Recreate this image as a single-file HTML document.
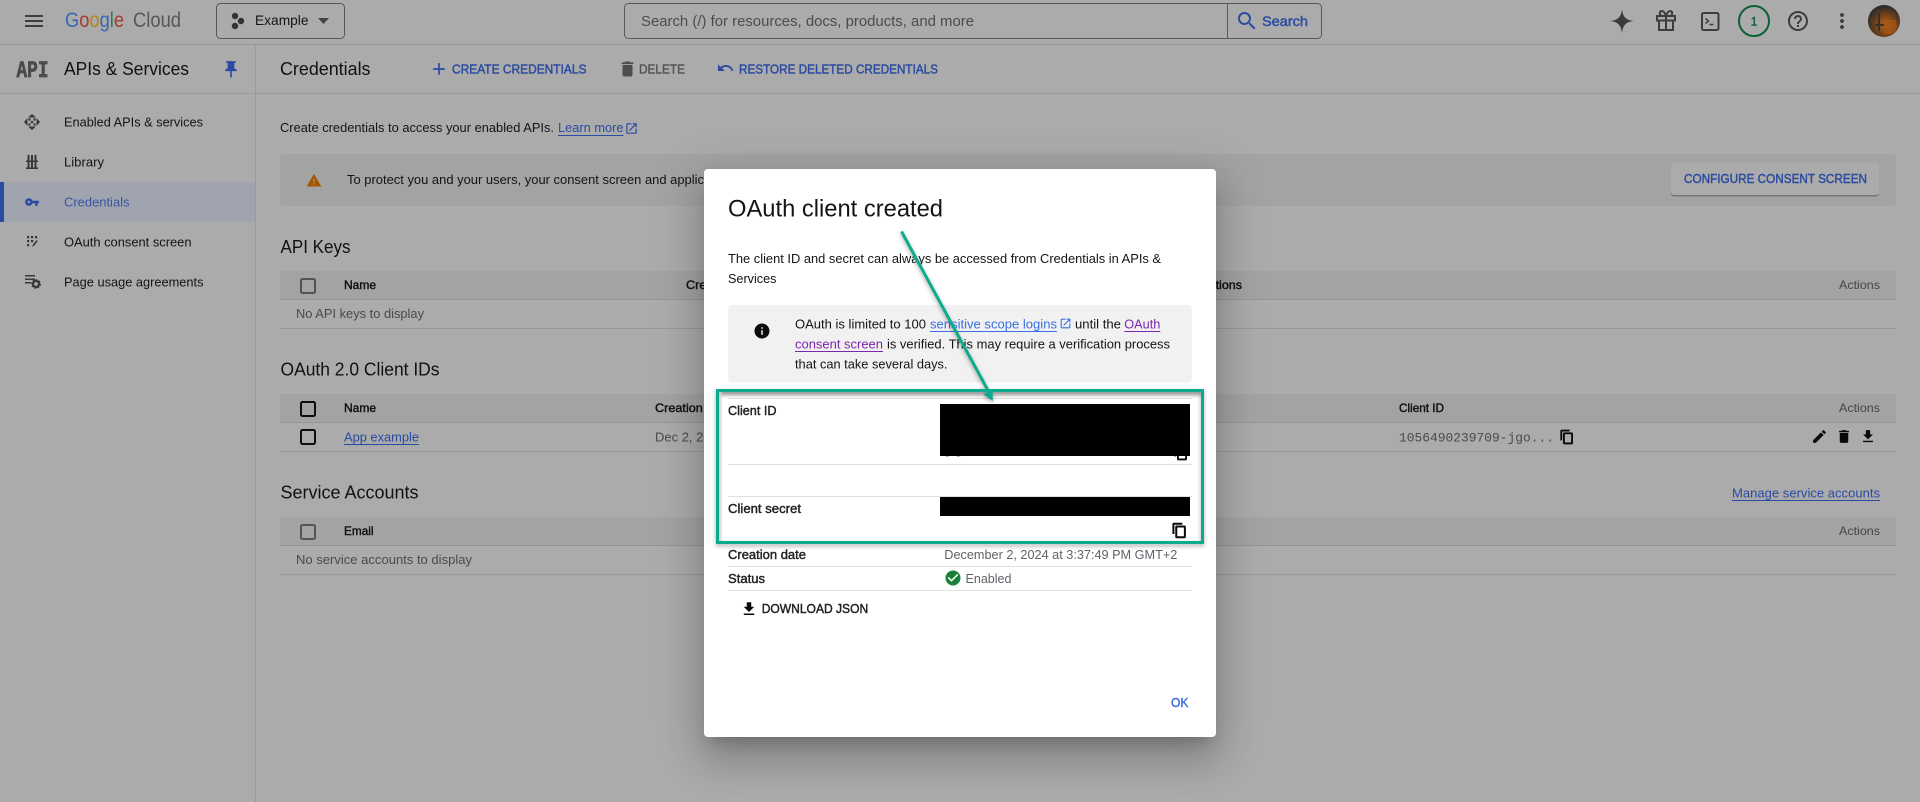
<!DOCTYPE html>
<html lang="en"><head><meta charset="utf-8"><title>Credentials</title>
<style>
html,body{margin:0;padding:0;width:1920px;height:802px;overflow:hidden;background:#ababab}
svg{position:absolute;left:0;top:0}
text{font-family:"Liberation Sans",Arial,sans-serif;font-size:13px;fill:#141414}
.m{stroke:currentColor;stroke-width:.42px}
.h{font-size:18px;fill:#111}
.th{font-size:12px;color:#111;fill:#111;stroke:#111;stroke-width:.42px}
.ac{font-size:12px;fill:#454545}
.mu{fill:#4a4a4a}
.b{fill:#2a4ba2}
.lb{fill:#3b6ee0}
.pu{fill:#7a27ad}
.dg{fill:#5f6368}
.l{fill:#202124;stroke:#202124;stroke-width:.42px}
#dlg{position:absolute;left:704px;top:169px;width:512px;height:568px;background:#fff;border-radius:4px;box-shadow:0 11px 15px -7px rgba(0,0,0,.2),0 24px 38px 3px rgba(0,0,0,.14),0 9px 46px 8px rgba(0,0,0,.12)}
</style></head><body>
<svg width="1920" height="802" viewBox="0 0 1920 802" xmlns="http://www.w3.org/2000/svg">
<defs>
<symbol id="i-menu" viewBox="0 0 24 24"><path d="M3 18h18v-2H3v2zm0-5h18v-2H3v2zm0-7v2h18V6H3z"/></symbol>
<symbol id="i-search" viewBox="0 0 24 24"><path d="M15.500 14h-.79l-.28-.27A6.471 6.471 0 0 0 16 9.500 6.500 6.500 0 1 0 9.500 16c1.610 0 3.090-.59 4.230-1.570l.27.28v.79l5 4.990L20.490 19l-4.990-5zm-6 0C7.010 14 5 11.990 5 9.500S7.010 5 9.500 5 14 7.010 14 9.500 11.990 14 9.500 14z"/></symbol>
<symbol id="i-add" viewBox="0 0 24 24"><path d="M19 13h-6v6h-2v-6H5v-2h6V5h2v6h6v2z"/></symbol>
<symbol id="i-del" viewBox="0 0 24 24"><path d="M6 19c0 1.100.9 2 2 2h8c1.100 0 2-.9 2-2V7H6v12zM19 4h-3.500l-1-1h-5l-1 1H5v2h14V4z"/></symbol>
<symbol id="i-undo" viewBox="0 0 24 24"><path d="M12.500 8c-2.650 0-5.050.99-6.900 2.600L2 7v9h9l-3.620-3.620c1.390-1.160 3.160-1.880 5.120-1.880 3.540 0 6.550 2.310 7.600 5.500l2.370-.78C21.080 11.030 17.150 8 12.500 8z"/></symbol>
<symbol id="i-key" viewBox="0 0 24 24"><path d="M12.650 10C11.830 7.670 9.610 6 7 6c-3.310 0-6 2.690-6 6s2.690 6 6 6c2.610 0 4.830-1.670 5.650-4H17v4h4v-4h2v-4H12.650zM7 14c-1.100 0-2-.9-2-2s.9-2 2-2 2 .9 2 2-.9 2-2 2z"/></symbol>
<symbol id="i-warn" viewBox="0 0 24 24"><path d="M1 21h22L12 2 1 21zm12-3h-2v-2h2v2zm0-4h-2v-4h2v4z"/></symbol>
<symbol id="i-info" viewBox="0 0 24 24"><path d="M12 2C6.480 2 2 6.480 2 12s4.480 10 10 10 10-4.480 10-10S17.520 2 12 2zm1 15h-2v-6h2v6zm0-8h-2V7h2v2z"/></symbol>
<symbol id="i-copy" viewBox="0 0 24 24"><path d="M16 1H4c-1.100 0-2 .9-2 2v14h2.800V3.800H16V1zm3 4H8c-1.100 0-2 .9-2 2v14c0 1.100.9 2 2 2h11c1.100 0 2-.9 2-2V7c0-1.100-.9-2-2-2zm-.8 15.200H8.800V7.800h9.400v12.400z"/></symbol>
<symbol id="i-edit" viewBox="0 0 24 24"><path d="M3 17.250V21h3.750L17.810 9.940l-3.750-3.750L3 17.250zM20.710 7.040c.39-.39.39-1.020 0-1.410l-2.340-2.340c-.39-.39-1.020-.39-1.410 0l-1.830 1.830 3.750 3.750 1.830-1.830z"/></symbol>
<symbol id="i-dl" viewBox="0 0 24 24"><path d="M19 9h-4V3H9v6H5l7 7 7-7zM5 18v2h14v-2H5z"/></symbol>
<symbol id="i-check" viewBox="0 0 24 24"><path d="M12 2C6.480 2 2 6.480 2 12s4.480 10 10 10 10-4.480 10-10S17.520 2 12 2zm-2 15l-5-5 1.410-1.410L10 14.170l7.590-7.590L19 8l-9 9z"/></symbol>
<symbol id="i-open" viewBox="0 0 24 24"><path d="M19 19H5V5h7V3H5c-1.110 0-2 .9-2 2v14c0 1.100.89 2 2 2h14c1.100 0 2-.9 2-2v-7h-2v7zM14 3v2h3.590l-9.830 9.830 1.410 1.410L19 6.410V10h2V3h-7z"/></symbol>
<symbol id="i-pin" viewBox="0 0 24 24"><path d="M16 9V4h1c.55 0 1-.45 1-1s-.45-1-1-1H7c-.55 0-1 .45-1 1s.45 1 1 1h1v5c0 1.660-1.340 3-3 3v2h5.970v7l1 1 1-1v-7H19v-2c-1.660 0-3-1.340-3-3z"/></symbol>
<symbol id="i-help" viewBox="0 0 24 24"><path d="M11 18h2v-2h-2v2zm1-16C6.480 2 2 6.480 2 12s4.480 10 10 10 10-4.480 10-10S17.520 2 12 2zm0 18c-4.410 0-8-3.590-8-8s3.590-8 8-8 8 3.590 8 8-3.590 8-8 8zm0-14c-2.210 0-4 1.790-4 4h2c0-1.100.9-2 2-2s2 .9 2 2c0 2-3 1.750-3 5h2c0-2.250 3-2.500 3-5 0-2.210-1.790-4-4-4z"/></symbol>
<symbol id="i-more" viewBox="0 0 24 24"><path d="M12 8c1.100 0 2-.9 2-2s-.9-2-2-2-2 .9-2 2 .9 2 2 2zm0 2c-1.100 0-2 .9-2 2s.9 2 2 2 2-.9 2-2-.9-2-2-2zm0 6c-1.100 0-2 .9-2 2s.9 2 2 2 2-.9 2-2-.9-2-2-2z"/></symbol>
<radialGradient id="av" cx="55%" cy="62%" r="58%"><stop offset="0" stop-color="#b8641c"/><stop offset=".5" stop-color="#7c4416"/><stop offset="1" stop-color="#2a2c2a"/></radialGradient>
</defs>

<rect width="1920" height="802" fill="#ababab"/>
<rect x="0" y="44" width="1920" height="1" fill="#969696"/>
<rect x="0" y="93" width="1920" height="1" fill="#9a9a9a"/>
<rect x="255" y="45" width="1" height="757" fill="#9a9a9a"/>

<use href="#i-menu" x="22" y="9" width="24" height="24" fill="#3e3e3e"/>
<text x="65" y="27" textLength="59" lengthAdjust="spacingAndGlyphs" style="font-size:21px"><tspan fill="#3a66b5">G</tspan><tspan fill="#a83a30">o</tspan><tspan fill="#b08a12">o</tspan><tspan fill="#3a66b5">g</tspan><tspan fill="#2f7d47">l</tspan><tspan fill="#a83a30">e</tspan></text>
<text x="133" y="27" textLength="48" lengthAdjust="spacingAndGlyphs" style="font-size:21px;fill:#575757">Cloud</text>

<rect x="216.500" y="3.500" width="128" height="35" rx="4" fill="none" stroke="#565656"/>
<circle cx="235" cy="16" r="3.200" fill="#333"/><circle cx="241" cy="21" r="3.200" fill="#333"/><circle cx="235" cy="26" r="3.200" fill="#333"/>
<text x="255" y="25" textLength="53.500" lengthAdjust="spacingAndGlyphs" style="font-size:14px">Example</text>
<path d="M318 18h11l-5.500 6z" fill="#444"/>

<rect x="624.500" y="3.500" width="697" height="35" rx="4" fill="none" stroke="#5a5a5a"/>
<rect x="1227" y="4" width="1" height="34" fill="#5a5a5a"/>
<text x="641" y="26" textLength="333" lengthAdjust="spacingAndGlyphs" style="font-size:14.500px;fill:#4c4c4c">Search (/) for resources, docs, products, and more</text>
<use href="#i-search" x="1235" y="9" width="24" height="24" fill="#2a4ba2"/>
<text x="1262" y="26" class="b m" color="#2a4ba2" textLength="46" lengthAdjust="spacingAndGlyphs" style="font-size:14px">Search</text>

<path d="M1622 9.500C1623 17 1626 20 1633.500 21 1626 22 1623 25 1622 33 1621 25 1618 22 1610.500 21 1618 20 1621 17 1622 9.500Z" fill="#3b3b3b"/>
<g fill="none" stroke="#3d3d3d" stroke-width="2"><rect x="1657" y="16" width="18" height="4.500"/><path d="M1659 20.500V30H1673V20.500M1666 16V30M1666 16c-1-3-2.500-5-4.300-5-2.500 0-2.500 4 0 5M1666 16c1-3 2.500-5 4.300-5 2.500 0 2.500 4 0 5"/></g>
<rect x="1702" y="13" width="16.500" height="17" rx="1.500" fill="none" stroke="#3d3d3d" stroke-width="2"/><path d="M1705.500 18.500l3 2.500-3 2.500M1709.500 24.500h4" fill="none" stroke="#3d3d3d" stroke-width="1.500"/>
<circle cx="1754" cy="21" r="15" fill="none" stroke="#0b6034" stroke-width="2"/>
<text x="1750.700" y="25.500" class="m" color="#0b6034" style="font-size:12px;fill:#0b6034">1</text>
<use href="#i-help" x="1786" y="9" width="24" height="24" fill="#3d3d3d"/>
<use href="#i-more" x="1830" y="9" width="24" height="24" fill="#3d3d3d"/>
<ellipse cx="1884" cy="21" rx="16" ry="16" fill="url(#av)"/>
<path d="M1878 13h2v18h-2zM1875 24h9v2h-9z" fill="#35332c"/><path d="M1884 20h12l1 9-4 5h-9z" fill="#a3561a" opacity=".75"/>

<text x="16.500" y="77" textLength="32" lengthAdjust="spacingAndGlyphs" style="font-family:'Liberation Mono',monospace;font-weight:700;font-size:23px;fill:#4b4b4b;stroke:#4b4b4b;stroke-width:.7px">API</text>
<text x="64" y="75" class="h" textLength="125" lengthAdjust="spacingAndGlyphs">APIs &amp; Services</text>
<use href="#i-pin" x="221" y="59.500" width="20" height="20" fill="#2a4ba2"/>
<text x="280" y="75" class="h" textLength="90.500" lengthAdjust="spacingAndGlyphs">Credentials</text>
<use href="#i-add" x="429" y="59" width="20" height="20" fill="#2a4ba2"/>
<text x="452" y="73.500" class="b m" color="#2a4ba2" textLength="134.500" lengthAdjust="spacingAndGlyphs" style="font-size:12.500px">CREATE CREDENTIALS</text>
<use href="#i-del" x="617.500" y="59" width="20" height="20" fill="#4e4e4e"/>
<text x="639" y="73.500" class="m" color="#555" textLength="46" lengthAdjust="spacingAndGlyphs" style="font-size:12.500px;fill:#555">DELETE</text>
<use href="#i-undo" x="716.500" y="59" width="18" height="18" fill="#2a4ba2"/>
<text x="739" y="73.500" class="b m" color="#2a4ba2" textLength="199" lengthAdjust="spacingAndGlyphs" style="font-size:12.500px">RESTORE DELETED CREDENTIALS</text>

<rect x="0" y="182" width="255" height="40" fill="#a0a4af"/>
<rect x="0" y="182" width="4" height="40" fill="#2a4ba2"/>
<g fill="#383838">
<path d="M32 114l4 3.500h-8zM32 130l4-3.500h-8zM24 122l3.500-4v8zM40 122l-3.500-4v8z"/>
<circle cx="29.500" cy="119.500" r="1.200"/><circle cx="34.500" cy="119.500" r="1.200"/><circle cx="29.500" cy="124.500" r="1.200"/><circle cx="34.500" cy="124.500" r="1.200"/><circle cx="32" cy="122" r="1.300"/>
<path d="M27.500 155h2v6h-2zM31 155h2v6h-2zM34.500 155h2v6h-2zM26 160.500h12v1.500H26zM27.500 162h2v6h-2zM31 162h2v6h-2zM34.500 162h2v6h-2zM26 167.500h12v1.500H26z"/>
<path d="M27 236h2.200v2.200H27zM31 236h2.200v2.200H31zM35 236h2.200v2.200H35zM27 240h2.200v2.200H27zM31 240h2.200v2.200H31zM27 244h2.200v2.200H27z"/>
<path d="M32 247l1-2.500 3.500-4.500 1.300 1-3.500 4.500z"/>
<path d="M25 275h10v1.500H25zM25 278.500h10v1.500H25zM25 282h6v1.500h-6z"/>
</g>
<circle cx="36" cy="284" r="3" fill="none" stroke="#383838" stroke-width="2.200"/><circle cx="36" cy="284" r="4.300" fill="none" stroke="#383838" stroke-width="1.200" stroke-dasharray="1.800 1.500"/>
<use href="#i-key" x="24.500" y="194.500" width="15" height="15" fill="#2a4ba2"/>
<text x="64" y="126.500" textLength="139" lengthAdjust="spacingAndGlyphs">Enabled APIs &amp; services</text>
<text x="64" y="166.500" textLength="40" lengthAdjust="spacingAndGlyphs">Library</text>
<text x="64" y="206.500" textLength="65.500" lengthAdjust="spacingAndGlyphs" style="fill:#3a55a0">Credentials</text>
<text x="64" y="246.500" textLength="127.500" lengthAdjust="spacingAndGlyphs">OAuth consent screen</text>
<text x="64" y="286.500" textLength="139.500" lengthAdjust="spacingAndGlyphs">Page usage agreements</text>

<text x="280" y="132" textLength="274" lengthAdjust="spacingAndGlyphs">Create credentials to access your enabled APIs.</text>
<text x="558" y="132" class="b" textLength="65.500" lengthAdjust="spacingAndGlyphs">Learn more</text>
<rect x="558" y="135" width="65.500" height="1" fill="#2a4ba2"/>
<use href="#i-open" x="624.500" y="121.500" width="14" height="14" fill="#2a4ba2"/>

<rect x="280" y="154" width="1616" height="52" rx="4" fill="#a3a3a3"/>
<use href="#i-warn" x="306" y="172.500" width="16" height="16" fill="#a35500"/>
<text x="347" y="183.800" textLength="357" lengthAdjust="spacingAndGlyphs">To protect you and your users, your consent screen and applic</text>
<rect x="1671" y="163" width="208" height="32" rx="3" fill="#000" opacity=".28" transform="translate(0 1.500)"/>
<rect x="1671" y="163" width="208" height="32" rx="3" fill="#ababab"/>
<text x="1684" y="183" class="b m" color="#2a4ba2" textLength="183" lengthAdjust="spacingAndGlyphs" style="font-size:12.500px">CONFIGURE CONSENT SCREEN</text>

<text x="280.500" y="252.800" class="h" textLength="70" lengthAdjust="spacingAndGlyphs">API Keys</text>
<rect x="280" y="271" width="1616" height="28" fill="#a3a3a3"/>
<rect x="280" y="299" width="1616" height="1" fill="#959595"/>
<rect x="280" y="328" width="1616" height="1" fill="#999"/>
<rect x="301" y="279" width="14" height="14" rx="1.500" fill="none" stroke="#535353" stroke-width="2"/>
<text x="344" y="288.800" class="th" textLength="32" lengthAdjust="spacingAndGlyphs">Name</text>
<text x="686" y="288.800" class="th" textLength="76" lengthAdjust="spacingAndGlyphs">Creation date</text>
<text x="1201" y="288.800" class="th" textLength="41" lengthAdjust="spacingAndGlyphs">Actions</text>
<text x="1839" y="288.800" class="ac" textLength="41" lengthAdjust="spacingAndGlyphs">Actions</text>
<text x="296" y="318" class="mu" textLength="128" lengthAdjust="spacingAndGlyphs">No API keys to display</text>

<text x="280.500" y="375.300" class="h" textLength="159" lengthAdjust="spacingAndGlyphs">OAuth 2.0 Client IDs</text>
<rect x="280" y="394" width="1616" height="28" fill="#a3a3a3"/>
<rect x="280" y="422" width="1616" height="1" fill="#959595"/>
<rect x="280" y="451" width="1616" height="1" fill="#999"/>
<rect x="301" y="402" width="14" height="14" rx="1.500" fill="none" stroke="#0e0e0e" stroke-width="2"/>
<rect x="301" y="430" width="14" height="14" rx="1.500" fill="none" stroke="#0e0e0e" stroke-width="2"/>
<text x="344" y="411.800" class="th" textLength="32" lengthAdjust="spacingAndGlyphs">Name</text>
<text x="655" y="411.800" class="th" textLength="76" lengthAdjust="spacingAndGlyphs">Creation date</text>
<text x="1399" y="411.800" class="th" textLength="45" lengthAdjust="spacingAndGlyphs">Client ID</text>
<text x="1839" y="411.800" class="ac" textLength="41" lengthAdjust="spacingAndGlyphs">Actions</text>
<text x="344" y="441.500" class="b" textLength="75" lengthAdjust="spacingAndGlyphs">App example</text>
<rect x="344" y="444" width="75" height="1" fill="#2a4ba2"/>
<text x="655" y="441.500" class="mu" textLength="70" lengthAdjust="spacingAndGlyphs">Dec 2, 2024</text>
<text x="1399" y="441.500" textLength="155" lengthAdjust="spacingAndGlyphs" style="font-family:'Liberation Mono',monospace;font-size:13px;fill:#4a4a4a">1056490239709-jgo...</text>
<use href="#i-copy" x="1559" y="429" width="16" height="16" fill="#0a0a0a"/>
<use href="#i-edit" x="1811" y="428" width="17" height="17" fill="#0a0a0a"/>
<use href="#i-del" x="1835.500" y="428" width="17" height="17" fill="#0a0a0a"/>
<use href="#i-dl" x="1859.500" y="428" width="17" height="17" fill="#0a0a0a"/>

<text x="280.500" y="498.600" class="h" textLength="138" lengthAdjust="spacingAndGlyphs">Service Accounts</text>
<text x="1732" y="497.500" class="b" textLength="148" lengthAdjust="spacingAndGlyphs">Manage service accounts</text>
<rect x="1732" y="500" width="148" height="1" fill="#2a4ba2"/>
<rect x="280" y="517" width="1616" height="28" fill="#a3a3a3"/>
<rect x="280" y="545" width="1616" height="1" fill="#959595"/>
<rect x="280" y="574" width="1616" height="1" fill="#999"/>
<rect x="301" y="525" width="14" height="14" rx="1.500" fill="none" stroke="#535353" stroke-width="2"/>
<text x="344" y="535" class="th" textLength="29.500" lengthAdjust="spacingAndGlyphs">Email</text>
<text x="1839" y="534.800" class="ac" textLength="41" lengthAdjust="spacingAndGlyphs">Actions</text>
<text x="296" y="564" class="mu" textLength="176" lengthAdjust="spacingAndGlyphs">No service accounts to display</text>
</svg>

<div id="dlg"></div>

<svg width="1920" height="802" viewBox="0 0 1920 802" xmlns="http://www.w3.org/2000/svg">
<defs>
<linearGradient id="ish" x1="0" y1="0" x2="0" y2="1"><stop offset="0" stop-color="#bdbdbd"/><stop offset="1" stop-color="#fff"/></linearGradient>
</defs>
<text x="728" y="216.500" textLength="215" lengthAdjust="spacingAndGlyphs" style="font-size:24px;fill:#141414">OAuth client created</text>
<text x="728" y="263" textLength="433" lengthAdjust="spacingAndGlyphs">The client ID and secret can always be accessed from Credentials in APIs &amp;</text>
<text x="728" y="283" textLength="48.500" lengthAdjust="spacingAndGlyphs">Services</text>

<rect x="728" y="305" width="464" height="77.500" rx="4" fill="#f1f1f1"/>
<use href="#i-info" x="753" y="322" width="18" height="18" fill="#0c0c0c"/>
<text x="795" y="328.300" textLength="131" lengthAdjust="spacingAndGlyphs">OAuth is limited to 100</text>
<text x="930" y="328.300" class="lb" textLength="127" lengthAdjust="spacingAndGlyphs">sensitive scope logins</text>
<rect x="930" y="331" width="127" height="1" fill="#3b6ee0"/>
<use href="#i-open" x="1059" y="317" width="13" height="13" fill="#3b6ee0"/>
<text x="1075" y="328.300" textLength="46" lengthAdjust="spacingAndGlyphs">until the</text>
<text x="1124.300" y="328.300" class="pu" textLength="36" lengthAdjust="spacingAndGlyphs">OAuth</text>
<rect x="1124.300" y="331" width="36" height="1" fill="#7a27ad"/>
<text x="795" y="348.300" class="pu" textLength="88" lengthAdjust="spacingAndGlyphs">consent screen</text>
<rect x="795" y="351" width="88" height="1" fill="#7a27ad"/>
<text x="887" y="348.300" textLength="283" lengthAdjust="spacingAndGlyphs">is verified. This may require a verification process</text>
<text x="795" y="368.300" textLength="152.500" lengthAdjust="spacingAndGlyphs">that can take several days.</text>

<rect x="719" y="392" width="482" height="6" fill="url(#ish)"/>
<rect x="719" y="392" width="3" height="150" fill="#f4f4f4"/>
<rect x="728" y="398" width="464" height="1" fill="#dcdcdc"/>
<rect x="728" y="464" width="464" height="1" fill="#e0e0e0"/>
<rect x="728" y="496" width="464" height="1" fill="#e0e0e0"/>
<rect x="728" y="566" width="464" height="1" fill="#e0e0e0"/>
<rect x="728" y="590" width="464" height="1" fill="#e0e0e0"/>
<text x="728" y="415" class="l" textLength="48.500" lengthAdjust="spacingAndGlyphs">Client ID</text>
<text x="944" y="454" class="dg">g   g</text>
<use href="#i-copy" x="1173" y="445" width="16" height="16" fill="#0a0a0a"/>
<rect x="940" y="404" width="250" height="52" fill="#000"/>
<text x="728" y="513" class="l" textLength="73" lengthAdjust="spacingAndGlyphs">Client secret</text>
<rect x="940" y="497" width="250" height="19" fill="#000"/>
<use href="#i-copy" x="1171" y="522" width="17" height="17" fill="#0a0a0a"/>

<g style="filter:drop-shadow(0 2px 2px rgba(0,0,0,.35))">
<rect x="717.500" y="390.500" width="485" height="152" fill="none" stroke="#0cab8e" stroke-width="3"/>
<path d="M901.500 231.500L990.500 395" fill="none" stroke="#0cab8e" stroke-width="3"/>
<path d="M992.800 401L983.500 394.500 992.500 389.500z" fill="#0cab8e"/>
</g>

<text x="728" y="559" class="l" textLength="78" lengthAdjust="spacingAndGlyphs">Creation date</text>
<text x="944.300" y="559" class="dg" textLength="233" lengthAdjust="spacingAndGlyphs">December 2, 2024 at 3:37:49 PM GMT+2</text>
<text x="728" y="583" class="l" textLength="37" lengthAdjust="spacingAndGlyphs">Status</text>
<use href="#i-check" x="944" y="569" width="18" height="18" fill="#188038"/>
<text x="965.500" y="583" class="dg" textLength="46" lengthAdjust="spacingAndGlyphs">Enabled</text>
<use href="#i-dl" x="740" y="600" width="18" height="18" fill="#0a0a0a"/>
<text x="761.700" y="613" class="l" textLength="106.500" lengthAdjust="spacingAndGlyphs">DOWNLOAD JSON</text>
<text x="1171" y="707" class="lb" textLength="17.500" lengthAdjust="spacingAndGlyphs" style="stroke:#3b6ee0;stroke-width:.42px">OK</text>
</svg>
</body></html>
